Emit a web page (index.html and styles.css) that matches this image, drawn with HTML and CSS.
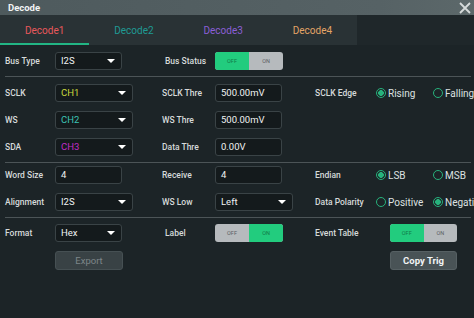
FILE: index.html
```html
<!DOCTYPE html>
<html lang="en">
<head>
  <meta charset="UTF-8">
  <meta name="viewport" content="width=device-width, initial-scale=1.0">
  <title>Decode</title>
  <link rel="stylesheet" href="styles.css">
</head>
<body>
  <div class="dialog">
    <div class="titlebar">
      <span class="title">Decode</span>
      <svg class="close" width="12" height="12" viewBox="0 0 12 12">
        <path d="M1 1 L11 11 M11 1 L1 11" stroke="#d6dbdb" stroke-width="1.8" fill="none"/>
      </svg>
    </div>

    <div class="tabbar">
      <div class="tabs">
        <div class="tab active red">Decode1</div>
        <div class="tab teal">Decode2</div>
        <div class="tab purple">Decode3</div>
        <div class="tab orange">Decode4</div>
      </div>
    </div>

    <div class="content">
      <div class="row">
        <div class="label">Bus Type</div>
        <div><div class="select short">I2S</div></div>
        <div class="label inset">Bus Status</div>
        <div>
          <div class="switch">
            <span class="half on">OFF</span>
            <span class="half">ON</span>
          </div>
        </div>
      </div>

      <div class="sep"></div>

      <div class="group">
        <div class="row">
          <div class="label">SCLK</div>
          <div><div class="select ch1">CH1</div></div>
          <div class="label">SCLK Thre</div>
          <div><div class="input">500.00mV</div></div>
          <div class="label">SCLK Edge</div>
          <div class="radio checked">Rising</div>
          <div class="radio">Falling</div>
        </div>
        <div class="row">
          <div class="label">WS</div>
          <div><div class="select ch2">CH2</div></div>
          <div class="label">WS Thre</div>
          <div><div class="input">500.00mV</div></div>
        </div>
        <div class="row">
          <div class="label">SDA</div>
          <div><div class="select ch3">CH3</div></div>
          <div class="label">Data Thre</div>
          <div><div class="input">0.00V</div></div>
        </div>
      </div>

      <div class="sep sep-tight"></div>

      <div class="group">
        <div class="row">
          <div class="label">Word Size</div>
          <div><div class="input">4</div></div>
          <div class="label">Receive</div>
          <div><div class="input">4</div></div>
          <div class="label">Endian</div>
          <div class="radio checked">LSB</div>
          <div class="radio">MSB</div>
        </div>
        <div class="row">
          <div class="label">Alignment</div>
          <div><div class="select">I2S</div></div>
          <div class="label">WS Low</div>
          <div><div class="select">Left</div></div>
          <div class="label">Data Polarity</div>
          <div class="radio">Positive</div>
          <div class="radio checked">Negative</div>
        </div>
      </div>

      <div class="sep sep-last"></div>

      <div class="group group-tight">
        <div class="row">
          <div class="label">Format</div>
          <div><div class="select short">Hex</div></div>
          <div class="label inset">Label</div>
          <div>
            <div class="switch">
              <span class="half">OFF</span>
              <span class="half on">ON</span>
            </div>
          </div>
          <div class="label">Event Table</div>
          <div class="wide">
            <div class="switch">
              <span class="half on">OFF</span>
              <span class="half">ON</span>
            </div>
          </div>
        </div>
        <div class="row row-btn">
          <div></div>
          <div><button class="btn disabled">Export</button></div>
          <div></div>
          <div></div>
          <div></div>
          <div class="wide"><button class="btn">Copy Trig</button></div>
        </div>
      </div>
    </div>
  </div>
</body>
</html>
```

FILE: styles.css
```css
body {
  margin: 0;
  background: #1c2427;
  font-family: Roboto, 'Liberation Sans', sans-serif;
}
.dialog {
  width: 474px;
  height: 318px;
  overflow: hidden;
  background: #1c2427;
  color: #d4d8d8;
}
.titlebar {
  height: 15px;
  display: flex;
  align-items: center;
  justify-content: space-between;
  padding: 0 3px 0 8px;
  background: linear-gradient(90deg, #4e5a5d, #566265 80%, #5c686a);
}
.title {
  font-size: 9.5px;
  font-weight: bold;
  color: #f2f4f4;
}
.close {
  display: block;
}
.tabbar {
  height: 30px;
  background: #1f272a;
}
.tabs {
  width: 357px;
  height: 30px;
  display: flex;
  background: #293235;
}
.tab {
  flex: 1;
  display: flex;
  align-items: center;
  justify-content: center;
  font-size: 10px;
  border-bottom: 2px solid transparent;
  box-sizing: border-box;
  padding-top: 2px;
}
.tab.active {
  border-bottom-color: #22b584;
}
.red { color: #e8585c; }
.teal { color: #1f9a94; }
.purple { color: #8b5fd6; }
.orange { color: #e2a466; }

.content {
  padding: 7px 0 0 5px;
}
.row {
  display: grid;
  grid-template-columns: 50px 107px 53px 100px 61px 57px 1fr;
  align-items: center;
  height: 18px;
  white-space: nowrap;
}
.group {
  display: flex;
  flex-direction: column;
  gap: 9px;
}
.group-tight {
  gap: 7px;
}
.label {
  font-size: 8.5px;
  font-weight: 500;
  color: #d6dada;
}
.label.inset {
  padding-left: 3px;
}
.sep {
  height: 1px;
  background: #4c5457;
  margin: 6px 3px 7px 0;
}
.sep-tight {
  margin: 6px 3px 3px 0;
}
.sep-last {
  margin: 6px 3px 6px 0;
}

.select, .input {
  position: relative;
  height: 18px;
  box-sizing: border-box;
  border: 1px solid #3a4346;
  border-radius: 3px;
  background: #141a1c;
  color: #f0f2f2;
  font-size: 9.5px;
  line-height: 16px;
  padding-left: 5px;
}
.select {
  width: 78px;
}
.select.short, .input {
  width: 67px;
}
.select::after {
  content: '';
  position: absolute;
  right: 6px;
  top: 6px;
  border-left: 4px solid transparent;
  border-right: 4px solid transparent;
  border-top: 4px solid #ffffff;
}
.ch1 { color: #c9d83c; }
.ch2 { color: #3cc4b4; }
.ch3 { color: #c02cc6; }

.radio {
  display: flex;
  align-items: center;
  gap: 2px;
  font-size: 10px;
  color: #dde1e1;
}
.radio::before {
  content: '';
  width: 8px;
  height: 8px;
  border: 1.5px solid #27b27c;
  border-radius: 50%;
  box-sizing: content-box;
}
.radio.checked::before {
  background: radial-gradient(circle, #27b27c 0 2.6px, transparent 3.1px);
}

.switch {
  display: flex;
  width: 68px;
  height: 18px;
  border-radius: 3px;
  overflow: hidden;
  background: #b6babd;
}
.wide .switch, .wide .btn {
  margin-left: 14px;
  width: 67px;
}
.half {
  flex: 1;
  display: flex;
  align-items: center;
  justify-content: center;
  font-size: 5.5px;
  color: #5b6063;
}
.half.on {
  background: #22cc7e;
  color: #117a48;
}

.row-btn {
  height: 19px;
}
.btn {
  width: 68px;
  height: 19px;
  border: 1px solid #566063;
  border-radius: 3px;
  background: #495356;
  color: #f2f4f4;
  font-family: Roboto, 'Liberation Sans', sans-serif;
  font-size: 9.5px;
  font-weight: bold;
  padding: 0;
}
.btn.disabled {
  background: #394245;
  border-color: #465053;
  color: #7d8689;
  font-weight: normal;
}
```
